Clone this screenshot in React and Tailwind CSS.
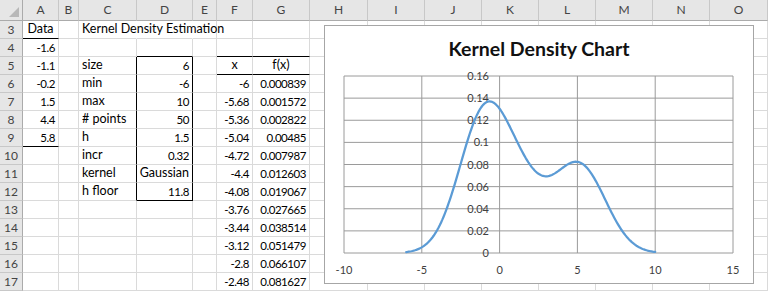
import React from 'react';

const COLS = ['A', 'B', 'C', 'D', 'E', 'F', 'G', 'H', 'I', 'J', 'K', 'L', 'M', 'N', 'O'];
const ROWS = [3, 4, 5, 6, 7, 8, 9, 10, 11, 12, 13, 14, 15, 16, 17];

// value, align (l | c | r)
const CELLS = {
  A3: ['Data', 'c'], C3: ['Kernel Density Estimation', 'l'],
  A4: ['-1.6', 'r'],
  A5: ['-1.1', 'r'], C5: ['size', 'l'], D5: ['6', 'r'], F5: ['x', 'c'], G5: ['f(x)', 'c'],
  A6: ['-0.2', 'r'], C6: ['min', 'l'], D6: ['-6', 'r'], F6: ['-6', 'r'], G6: ['0.000839', 'r'],
  A7: ['1.5', 'r'], C7: ['max', 'l'], D7: ['10', 'r'], F7: ['-5.68', 'r'], G7: ['0.001572', 'r'],
  A8: ['4.4', 'r'], C8: ['# points', 'l'], D8: ['50', 'r'], F8: ['-5.36', 'r'], G8: ['0.002822', 'r'],
  A9: ['5.8', 'r'], C9: ['h', 'l'], D9: ['1.5', 'r'], F9: ['-5.04', 'r'], G9: ['0.00485', 'r'],
  C10: ['incr', 'l'], D10: ['0.32', 'r'], F10: ['-4.72', 'r'], G10: ['0.007987', 'r'],
  C11: ['kernel', 'l'], D11: ['Gaussian', 'r'], F11: ['-4.4', 'r'], G11: ['0.012603', 'r'],
  C12: ['h floor', 'l'], D12: ['11.8', 'r'], F12: ['-4.08', 'r'], G12: ['0.019067', 'r'],
  F13: ['-3.76', 'r'], G13: ['0.027665', 'r'],
  F14: ['-3.44', 'r'], G14: ['0.038514', 'r'],
  F15: ['-3.12', 'r'], G15: ['0.051479', 'r'],
  F16: ['-2.8', 'r'], G16: ['0.066107', 'r'],
  F17: ['-2.48', 'r'], G17: ['0.081627', 'r'],
};

// black borders
const BOTTOM = new Set(['A3', 'A9', 'D4', 'D12', 'F4', 'G4', 'F5', 'G5']);
const RIGHT = new Set(['C5', 'C6', 'C7', 'C8', 'C9', 'C10', 'C11', 'C12', 'D5', 'D6', 'D7', 'D8', 'D9', 'D10', 'D11', 'D12']);
// text overflows across these, so no gridline
const NO_RIGHT = new Set(['C3', 'D3']);

const DATA = [-1.6, -1.1, -0.2, 1.5, 4.4, 5.8];
const H = 1.5;

const kde = (x) => {
  const k = 1 / (DATA.length * H * Math.sqrt(2 * Math.PI));
  return k * DATA.reduce((s, d) => s + Math.exp(-((x - d) ** 2) / (2 * H * H)), 0);
};

const Cell = ({ id }) => {
  const c = CELLS[id];
  const align = c ? c[1] : 'l';
  const numeric = c && !isNaN(Number(c[0]));
  const bottom = BOTTOM.has(id) ? 'border-b-black' : 'border-b-[#dadada]';
  const right = RIGHT.has(id) ? 'border-r-black' : NO_RIGHT.has(id) ? 'border-r-transparent' : 'border-r-[#dadada]';
  const just = align === 'r' ? 'justify-end pr-[3px]' : align === 'c' ? 'justify-center' : 'justify-start pl-[3px]';
  const size = numeric ? 'text-[11.5px] tracking-[-0.45px]' : 'text-[12.5px]';
  return (
    <div className={`relative flex items-center whitespace-nowrap border-r border-b text-black ${size} ${bottom} ${right} ${just}`}>
      {c && <span className={align === 'l' ? 'absolute left-[3px] z-10' : ''}>{c[0]}</span>}
    </div>
  );
};

const Chart = () => {
  const sx = (x) => 19 + ((x + 10) / 25) * 389;
  const sy = (y) => 227 - (y / 0.16) * 177;
  const pts = [];
  for (let i = 0; i <= 200; i++) {
    const x = -6 + (16 * i) / 200;
    pts.push(`${sx(x).toFixed(2)},${sy(kde(x)).toFixed(2)}`);
  }
  const xs = [-10, -5, 0, 5, 10, 15];
  const ys = [0, 0.02, 0.04, 0.06, 0.08, 0.1, 0.12, 0.14, 0.16];
  return (
    <div className="absolute left-[324px] top-[25px] z-20 w-[430px] h-[259px] border border-[#a6a6a6] bg-white">
      <svg width="428" height="257" className="block" style={{ fontFamily: 'Lato, "Open Sans", sans-serif' }}>
        <text x="214" y="30" textAnchor="middle" fontSize="19.5" fontWeight="700" fill="#111">Kernel Density Chart</text>
        {ys.map((v) => (
          <line key={`h${v}`} x1="19" x2="408" y1={sy(v)} y2={sy(v)} stroke="#9a9a9a" strokeWidth="1" />
        ))}
        {xs.map((v) => (
          <line key={`v${v}`} x1={sx(v)} x2={sx(v)} y1="50" y2="227" stroke="#9a9a9a" strokeWidth="1" />
        ))}
        {ys.map((v) => (
          <text key={`yl${v}`} x="164" y={sy(v) + 4} textAnchor="end" fontSize="11" fill="#404040">{String(v)}</text>
        ))}
        {xs.map((v) => (
          <text key={`xl${v}`} x={sx(v)} y="248" textAnchor="middle" fontSize="11" fill="#404040">{String(v)}</text>
        ))}
        <polyline points={pts.join(' ')} fill="none" stroke="#5b9bd5" strokeWidth="2.25" strokeLinejoin="round" strokeLinecap="round" />
      </svg>
    </div>
  );
};

export default function App() {
  return (
    <div className="relative w-[768px] h-[291px] overflow-hidden bg-white" style={{ fontFamily: 'Lato, "Liberation Sans", sans-serif' }}>
      <div className="grid grid-cols-[23px_36px_20px_58px_56px_24px_36px_57px_58px_57px_57px_57px_57px_57px_57px_58px] grid-rows-[21px_repeat(15,18px)]">
        {/* corner */}
        <div className="relative bg-[#e6e6e6] border-r border-b border-[#ababab]">
          <svg width="10" height="10" className="absolute right-[3px] bottom-[3px]">
            <polygon points="10,0 10,10 0,10" fill="#b8b8b8" />
          </svg>
        </div>
        {COLS.map((c) => (
          <div key={c} className="flex items-center justify-center bg-[#e6e6e6] border-r border-r-[#c8c8c8] border-b border-b-[#ababab] text-[12px] text-[#444]">
            {c}
          </div>
        ))}
        {ROWS.map((r) => (
          <React.Fragment key={r}>
            <div className="flex items-center justify-center bg-[#e6e6e6] border-r border-r-[#ababab] border-b border-b-[#c8c8c8] text-[12px] text-[#444]">
              {r}
            </div>
            {COLS.map((c) => (
              <Cell key={c + r} id={c + r} />
            ))}
          </React.Fragment>
        ))}
      </div>
      <Chart />
    </div>
  );
}
